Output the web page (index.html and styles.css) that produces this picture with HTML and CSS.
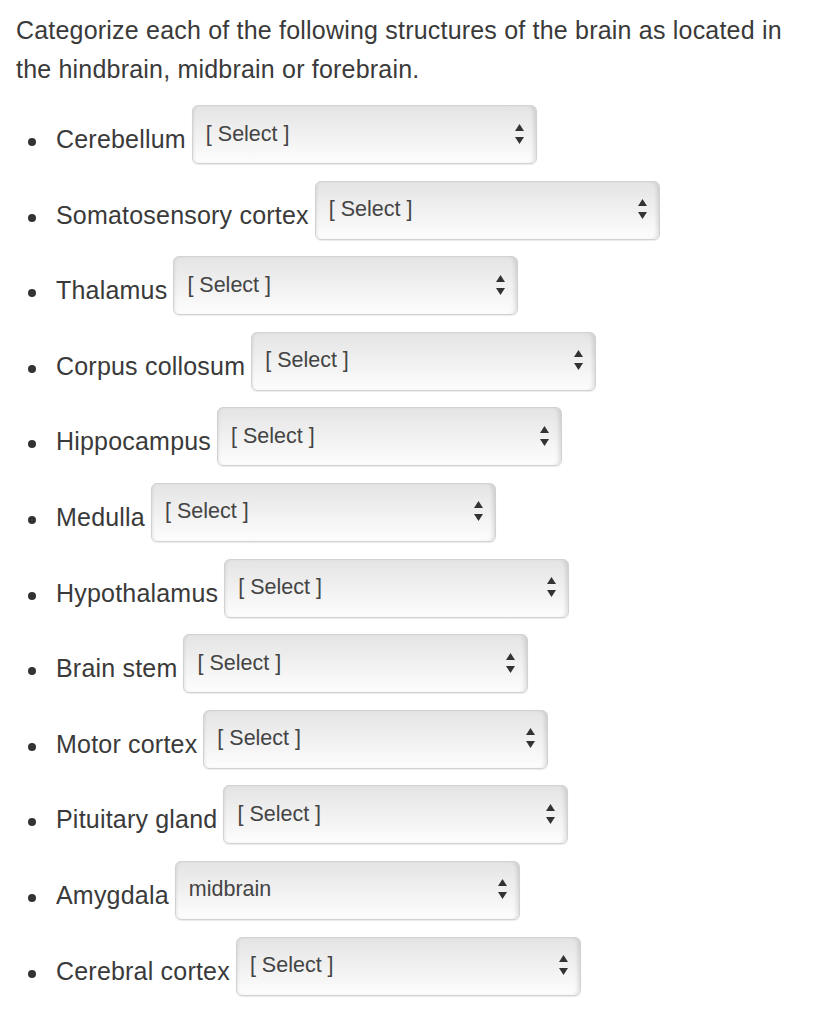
FILE: index.html
```html
<!DOCTYPE html>
<html lang="en">
<head>
  <meta charset="UTF-8">
  <meta name="viewport" content="width=device-width, initial-scale=1.0">
  <title>Brain structures</title>
  <link rel="stylesheet" href="styles.css">
</head>
<body>
  <p class="question">Categorize each of the following structures of the brain as located in the hindbrain, midbrain or forebrain.</p>

  <ul class="answers">
    <li><span class="label">Cerebellum</span><div class="select"><span>[ Select ]</span><svg class="arrows" viewBox="0 0 9 20"><polygon points="0,7 4.5,0 9,7"/><polygon points="0,13 9,13 4.5,20"/></svg></div></li>
    <li><span class="label">Somatosensory cortex</span><div class="select"><span>[ Select ]</span><svg class="arrows" viewBox="0 0 9 20"><polygon points="0,7 4.5,0 9,7"/><polygon points="0,13 9,13 4.5,20"/></svg></div></li>
    <li><span class="label">Thalamus</span><div class="select"><span>[ Select ]</span><svg class="arrows" viewBox="0 0 9 20"><polygon points="0,7 4.5,0 9,7"/><polygon points="0,13 9,13 4.5,20"/></svg></div></li>
    <li><span class="label">Corpus collosum</span><div class="select"><span>[ Select ]</span><svg class="arrows" viewBox="0 0 9 20"><polygon points="0,7 4.5,0 9,7"/><polygon points="0,13 9,13 4.5,20"/></svg></div></li>
    <li><span class="label">Hippocampus</span><div class="select"><span>[ Select ]</span><svg class="arrows" viewBox="0 0 9 20"><polygon points="0,7 4.5,0 9,7"/><polygon points="0,13 9,13 4.5,20"/></svg></div></li>
    <li><span class="label">Medulla</span><div class="select"><span>[ Select ]</span><svg class="arrows" viewBox="0 0 9 20"><polygon points="0,7 4.5,0 9,7"/><polygon points="0,13 9,13 4.5,20"/></svg></div></li>
    <li><span class="label">Hypothalamus</span><div class="select"><span>[ Select ]</span><svg class="arrows" viewBox="0 0 9 20"><polygon points="0,7 4.5,0 9,7"/><polygon points="0,13 9,13 4.5,20"/></svg></div></li>
    <li><span class="label">Brain stem</span><div class="select"><span>[ Select ]</span><svg class="arrows" viewBox="0 0 9 20"><polygon points="0,7 4.5,0 9,7"/><polygon points="0,13 9,13 4.5,20"/></svg></div></li>
    <li><span class="label">Motor cortex</span><div class="select"><span>[ Select ]</span><svg class="arrows" viewBox="0 0 9 20"><polygon points="0,7 4.5,0 9,7"/><polygon points="0,13 9,13 4.5,20"/></svg></div></li>
    <li><span class="label">Pituitary gland</span><div class="select"><span>[ Select ]</span><svg class="arrows" viewBox="0 0 9 20"><polygon points="0,7 4.5,0 9,7"/><polygon points="0,13 9,13 4.5,20"/></svg></div></li>
    <li><span class="label">Amygdala</span><div class="select"><span>midbrain</span><svg class="arrows" viewBox="0 0 9 20"><polygon points="0,7 4.5,0 9,7"/><polygon points="0,13 9,13 4.5,20"/></svg></div></li>
    <li><span class="label">Cerebral cortex</span><div class="select"><span>[ Select ]</span><svg class="arrows" viewBox="0 0 9 20"><polygon points="0,7 4.5,0 9,7"/><polygon points="0,13 9,13 4.5,20"/></svg></div></li>
  </ul>
</body>
</html>
```
FILE: styles.css
```css
body {
  font-family: "Liberation Sans", Arial, sans-serif;
  color: #3a3a3a;
  background-color: #fff;
  margin: 0;
  padding: 11px 16px 0 16px;
  letter-spacing: 0.2px;
}

.question {
  font-size: 25px;
  line-height: 39px;
  margin: 0 0 16px 0;
}

.answers {
  list-style: none;
  margin: 0;
  padding: 0;
}

.answers li {
  display: flex;
  align-items: flex-start;
  margin-bottom: 16.6px;
}

/* bullet dot */
.answers li::before {
  content: "";
  width: 8px;
  height: 8px;
  border-radius: 50%;
  background-color: #333;
  margin: 33px 20px 0 12px;
  flex-shrink: 0;
}

.label {
  font-size: 25px;
  line-height: 30px;
  margin-top: 19px;
  white-space: nowrap;
}

.select {
  display: flex;
  align-items: center;
  justify-content: space-between;
  box-sizing: border-box;
  width: 345px;
  height: 59px;
  margin-left: 6px;
  padding: 0 12px 0 13px;
  border: 1px solid #d2d2d2;
  border-radius: 6px;
  background: linear-gradient(#e4e4e4, #f2f2f2 55%, #fdfdfd);
  box-shadow: inset -4px 0 4px -2px rgba(0, 0, 0, 0.12), inset 3px 0 3px -2px rgba(0, 0, 0, 0.08), 0 1px 1px rgba(0, 0, 0, 0.08);
  font-size: 21.5px;
  letter-spacing: 0;
  color: #444;
  flex-shrink: 0;
}

.select span {
  margin-top: -1px;
}

.arrows {
  width: 9px;
  height: 20px;
  fill: #333;
  margin-top: -2px;
}
```
